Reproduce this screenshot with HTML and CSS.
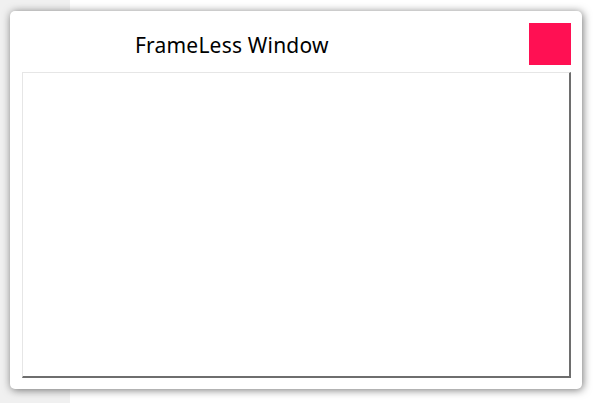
FILE: index.html
```html
<!DOCTYPE html>
<html>
<head>
<meta charset="utf-8">
<link rel="stylesheet" href="styles.css">
</head>
<body>
<div class="desk">
  <div class="window">
    <div class="header">
      <div class="title">FrameLess Window</div>
      <div class="close"></div>
    </div>
    <div class="content"></div>
  </div>
</div>
</body>
</html>
```
FILE: styles.css
```css
html, body {
  margin: 0;
  padding: 0;
}
body {
  width: 598px;
  height: 403px;
  background: linear-gradient(to right, #f0f0f0 0, #f0f0f0 70px, #ffffff 70px);
  font-family: "Noto Sans", "Open Sans", sans-serif;
}
.desk {
  padding: 11px 16px 14px 10px;
}
.window {
  width: 572px;
  height: 378px;
  box-sizing: border-box;
  background: #ffffff;
  border-radius: 5px;
  box-shadow: 1px 1px 8px rgba(0, 0, 0, 0.55);
  padding: 12px 11px 11px 12px;
  display: flex;
  flex-direction: column;
  gap: 7px;
}
.header {
  display: flex;
  align-items: center;
  justify-content: space-between;
  height: 42px;
}
.title {
  padding-left: 113px;
  font-size: 21px;
  letter-spacing: 0.2px;
  color: #000000;
  line-height: 24px;
  margin-top: 2px;
}
.close {
  width: 42px;
  height: 42px;
  background: #ff1053;
}
.content {
  flex: 1;
  border-top: 1px solid #e6e6e6;
  border-left: 1px solid #e6e6e6;
  border-right: 2px solid #6e6e6e;
  border-bottom: 2px solid #6e6e6e;
  background: #ffffff;
}
```
